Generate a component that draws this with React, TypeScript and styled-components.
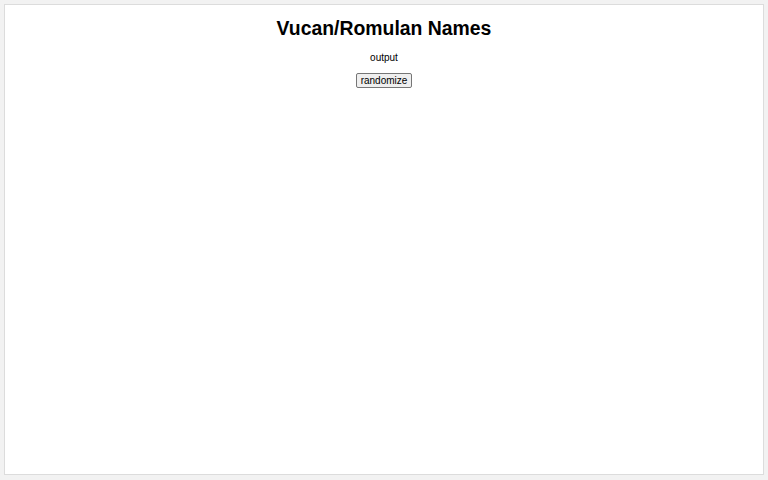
import styled, { createGlobalStyle } from 'styled-components';

const GlobalStyle = createGlobalStyle`
  html, body {
    margin: 0;
    padding: 0;
    background: #f2f2f2;
  }
  body {
    padding: 4px 4px 5px 4px;
    font-family: "Liberation Sans", Arial, sans-serif;
  }
`;

const App = () => {
  return (
    <>
      <GlobalStyle />
      <Styled.Panel>
        <Styled.Title>Vucan/Romulan Names</Styled.Title>
        <Styled.Output>output</Styled.Output>
        <Styled.Button type="button">randomize</Styled.Button>
      </Styled.Panel>
    </>
  );
};

export default App;

const Styled = {
  Panel: styled.div`
    box-sizing: border-box;
    height: 471px;
    border: 1px solid #dcdcdc;
    background: #fff;
    display: flex;
    flex-direction: column;
    align-items: center;
    padding-top: 12px;
  `,
  Title: styled.h1`
    margin: 0;
    font-size: 19.4px;
    line-height: 22px;
    font-weight: bold;
    color: #000;
  `,
  Output: styled.p`
    margin: 13px 0 0;
    font-size: 10px;
    line-height: 12px;
    color: #000;
  `,
  Button: styled.button`
    margin-top: 9px;
    padding: 1px 4px;
    font-family: "Liberation Sans", Arial, sans-serif;
    font-size: 10px;
    line-height: 11px;
    color: #000;
    background: #efefef;
    border: 1px solid #767676;
    border-radius: 2px;
  `,
};
